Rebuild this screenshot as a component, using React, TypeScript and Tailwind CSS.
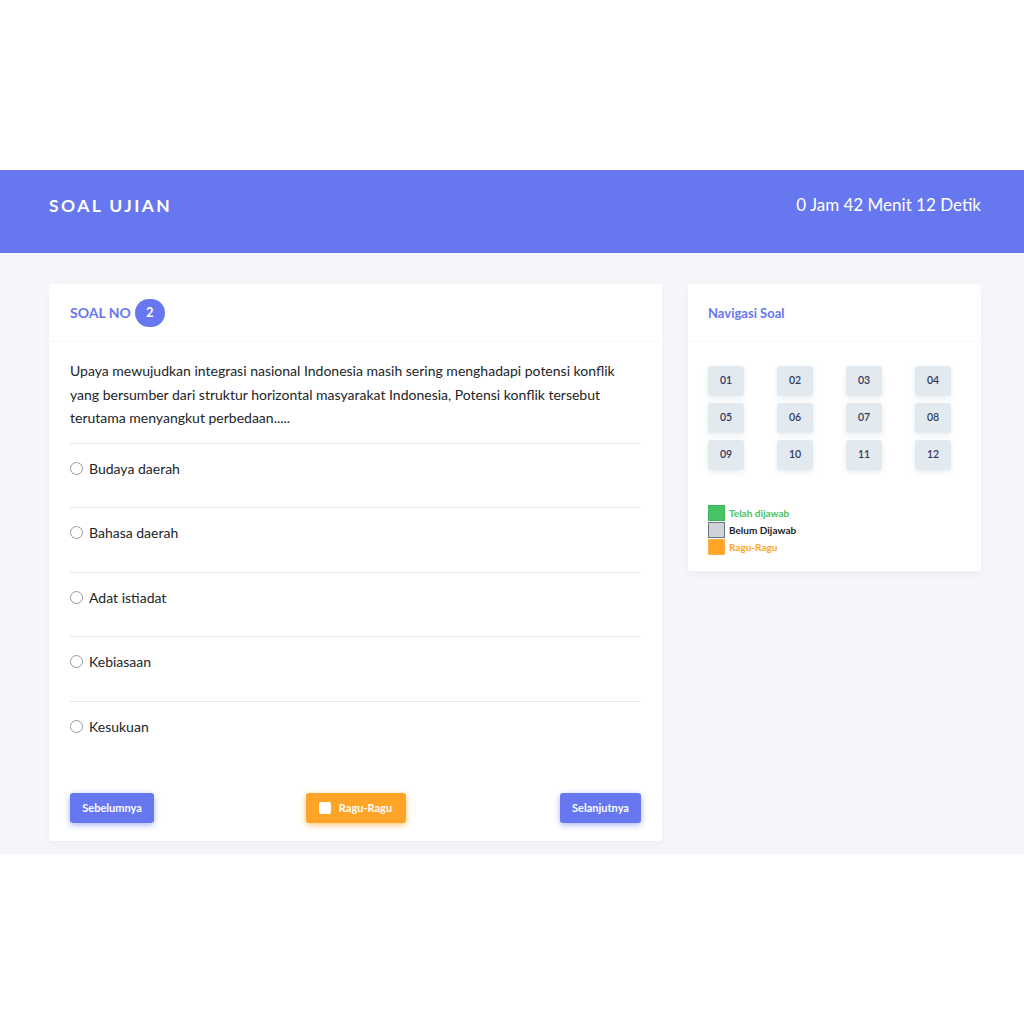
const OPTIONS = ['Budaya daerah', 'Bahasa daerah', 'Adat istiadat', 'Kebiasaan', 'Kesukuan'];
const NUMBERS = ['01', '02', '03', '04', '05', '06', '07', '08', '09', '10', '11', '12'];

const font = { fontFamily: 'Lato, "Noto Sans", sans-serif' };

export default function App() {
  return (
    <div className="min-h-[1024px] bg-white" style={font}>
      <div className="h-[170px]" />

      {/* Header */}
      <div className="h-[83px] bg-[#6777ef] flex items-center justify-between pl-[49px] pr-[43px] pb-[12px] text-white">
        <div className="text-[17.5px] font-bold tracking-[2.4px] pt-[1px]">SOAL UJIAN</div>
        <div className="text-[17px] -mt-[2px]">0 Jam 42 Menit 12 Detik</div>
      </div>

      {/* Content */}
      <div className="bg-[#f4f6f9] pl-[49px] pr-[43px] pt-[31px] pb-[13px]">
        <div className="flex gap-[26px] items-start">
          {/* Question card */}
          <div className="w-[613px] shrink-0 bg-white rounded-[3px] shadow-[0_4px_8px_rgba(0,0,0,0.03)]">
            <div className="h-[58px] flex items-center px-[21px] border-b border-[#f9f9f9]">
              <span className="text-[14px] font-bold text-[#6777ef]">SOAL NO</span>
              <span className="ml-[4px] w-[30px] h-[28px] rounded-full bg-[#6777ef] text-white text-[13px] font-bold flex items-center justify-center">2</span>
            </div>
            <div className="px-[21px] pt-[17px] pb-[18px]">
              <p className="max-w-[555px] text-[14px] leading-[23.5px] text-[#212529] pb-[13px]">
                Upaya mewujudkan integrasi nasional Indonesia masih sering menghadapi potensi konflik yang bersumber dari struktur horizontal masyarakat Indonesia, Potensi konflik tersebut terutama menyangkut perbedaan.....
              </p>
              {OPTIONS.map((o) => (
                <div key={o} className="border-t border-[#e6e6e6] h-[64.5px] pt-[14px]">
                  <label className="flex items-center gap-[6px] text-[14px] text-[#212529]">
                    <span className="w-[13px] h-[13px] rounded-full border border-[#9a9a9a] bg-white" />
                    {o}
                  </label>
                </div>
              ))}
              <div className="flex justify-between items-center mt-[28px]">
                <button className="h-[30px] w-[84px] rounded-[3px] bg-[#6777ef] text-white text-[11px] font-bold shadow-[0_2px_6px_#acb5f6]">
                  Sebelumnya
                </button>
                <button className="h-[30px] w-[100px] mr-[3px] rounded-[3px] bg-[#ffa426] text-white text-[11px] font-bold shadow-[0_2px_6px_#ffc473] flex items-center justify-center gap-[8px]">
                  <span className="w-[12px] h-[12px] rounded-[2px] bg-white" />
                  Ragu-Ragu
                </button>
                <button className="h-[30px] w-[81px] rounded-[3px] bg-[#6777ef] text-white text-[11px] font-bold shadow-[0_2px_6px_#acb5f6]">
                  Selanjutnya
                </button>
              </div>
            </div>
          </div>

          {/* Navigation card */}
          <div className="w-[293px] shrink-0 bg-white rounded-[3px] shadow-[0_4px_8px_rgba(0,0,0,0.03)]">
            <div className="h-[58px] flex items-center px-[20px] border-b border-[#f9f9f9]">
              <span className="text-[13px] font-bold text-[#6777ef] pt-[2px]">Navigasi Soal</span>
            </div>
            <div className="px-[20px] pt-[24px] pb-[16px]">
              <div className="grid grid-cols-4 gap-x-[33px] gap-y-[7px] w-[243px]">
                {NUMBERS.map((n) => (
                  <div key={n} className="w-[36px] h-[30px] rounded-[3px] bg-[#e3eaef] text-[#34395e] text-[10.5px] font-semibold flex items-center justify-center shadow-[0_2px_6px_#e6ecf1]">
                    {n}
                  </div>
                ))}
              </div>
              <div className="mt-[35px] flex flex-col gap-[1px] text-[10px] font-bold">
                <div className="flex items-center gap-[4px] text-[#47c363]">
                  <span className="w-[17px] h-[16px] bg-[#47c363] border border-[#3bb357]" />
                  Telah dijawab
                </div>
                <div className="flex items-center gap-[4px] text-[#212529]">
                  <span className="w-[17px] h-[16px] bg-[#cdd3d8] border border-[#6c757d]" />
                  Belum Dijawab
                </div>
                <div className="flex items-center gap-[4px] text-[#ffa426]">
                  <span className="w-[17px] h-[16px] bg-[#ffa426] border border-[#ffb347]" />
                  Ragu-Ragu
                </div>
              </div>
            </div>
          </div>
        </div>
      </div>
    </div>
  );
}
